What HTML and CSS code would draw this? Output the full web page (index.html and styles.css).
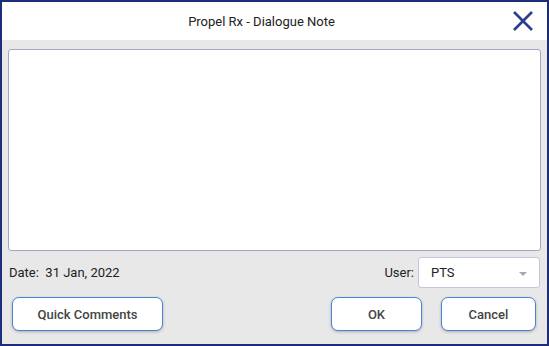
FILE: index.html
```html
<!DOCTYPE html>
<html lang="en">
<head>
    <meta charset="UTF-8">
    <title>Propel Rx - Dialogue Note</title>
    <link rel="stylesheet" href="styles.css">
</head>
<body>
    <div class="dialog">
        <div class="title-bar">
            <span class="title">Propel Rx - Dialogue Note</span>
            <button class="close-button" aria-label="Close">
                <svg width="22" height="22" viewBox="0 0 22 22">
                    <path d="M2 2 L20 20 M20 2 L2 20" stroke="#2b3f8f" stroke-width="2.6" fill="none"/>
                </svg>
            </button>
        </div>

        <div class="dialog-body">
            <textarea class="note-text"></textarea>

            <div class="info-row">
                <div class="date">Date:&nbsp; 31 Jan, 2022</div>
                <div class="user">
                    <span class="user-label">User:</span>
                    <div class="select">
                        <span>PTS</span>
                        <span class="caret"></span>
                    </div>
                </div>
            </div>

            <div class="button-row">
                <button class="btn btn-wide">Quick Comments</button>
                <div class="right-buttons">
                    <button class="btn btn-ok">OK</button>
                    <button class="btn btn-cancel">Cancel</button>
                </div>
            </div>
        </div>
    </div>
</body>
</html>
```

FILE: styles.css
```css
html, body {
    margin: 0;
    padding: 0;
}

body {
    font-family: Roboto, "Noto Sans", sans-serif;
    width: 549px;
    height: 346px;
    overflow: hidden;
}

.dialog {
    box-sizing: border-box;
    width: 549px;
    height: 346px;
    border: 2px solid #1e2d78;
    display: flex;
    flex-direction: column;
    background-color: #e8e8e8;
}

/* Title bar - title is centred in the space left of the close button */
.title-bar {
    height: 38px;
    background-color: #ffffff;
    display: flex;
    align-items: center;
    justify-content: center;
    padding-right: 26px;
    position: relative;
}

.title {
    font-size: 13px;
    color: #222222;
}

.close-button {
    position: absolute;
    right: 13px;
    top: 8px;
    width: 22px;
    height: 22px;
    padding: 0;
    border: none;
    background: none;
}

.close-button svg {
    display: block;
}

/* Body */
.dialog-body {
    flex: 1;
    padding: 9px 7px 0 6px;
    display: flex;
    flex-direction: column;
}

.note-text {
    box-sizing: border-box;
    width: 533px;
    height: 202px;
    border: 1px solid #a0a6c8;
    border-radius: 3px;
    background: #ffffff;
    resize: none;
    margin: 0;
}

.info-row {
    display: flex;
    justify-content: space-between;
    align-items: center;
    margin-top: 6px;
    height: 31px;
}

.date {
    font-size: 13px;
    color: #222222;
    padding-left: 1px;
}

.user {
    display: flex;
    align-items: center;
}

.user-label {
    font-size: 13px;
    color: #222222;
    margin-right: 4px;
}

.select {
    box-sizing: border-box;
    width: 122px;
    height: 31px;
    border: 1px solid #c2c6dc;
    border-radius: 3px;
    background: #ffffff;
    display: flex;
    align-items: center;
    justify-content: space-between;
    padding: 0 12px 0 12px;
    font-size: 13px;
    color: #222222;
}

.caret {
    width: 0;
    height: 0;
    border-left: 4px solid transparent;
    border-right: 4px solid transparent;
    border-top: 4px solid #a8a8a8;
    margin-top: 2px;
}

/* Buttons */
.button-row {
    display: flex;
    justify-content: space-between;
    margin-top: 9px;
    padding: 0 4px 0 4px;
}

.right-buttons {
    display: flex;
    gap: 19px;
}

.btn {
    box-sizing: border-box;
    height: 34px;
    background: #ffffff;
    border: 1.5px solid #4a82d4;
    border-radius: 7px;
    box-shadow: 0 1px 3px rgba(0, 0, 0, 0.25);
    font-family: Roboto, "Noto Sans", sans-serif;
    font-size: 13px;
    font-weight: 500;
    color: #444444;
    cursor: pointer;
}

.btn-wide {
    width: 151px;
}

.btn-ok {
    width: 91px;
}

.btn-cancel {
    width: 95px;
}
```
